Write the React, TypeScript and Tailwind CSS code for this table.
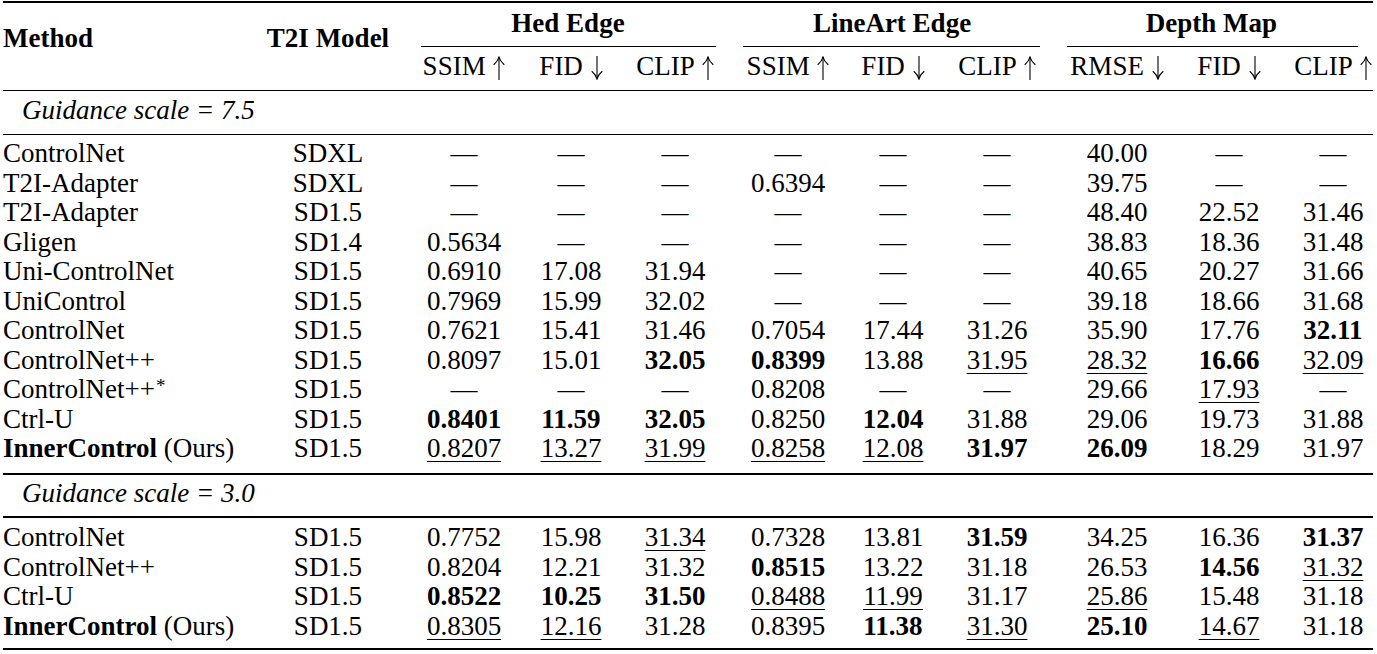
import React from "react";

const GRID =
  "grid grid-cols-[251px_148px_124px_90px_118px_108px_102px_106px_134px_90px_99px]";

type Row = { m: React.ReactNode; t: string; v: string[] };

const D = "—";

const sec1: Row[] = [
  { m: "ControlNet", t: "SDXL", v: [D, D, D, D, D, D, "40.00", D, D] },
  { m: "T2I-Adapter", t: "SDXL", v: [D, D, D, "0.6394", D, D, "39.75", D, D] },
  { m: "T2I-Adapter", t: "SD1.5", v: [D, D, D, D, D, D, "48.40", "22.52", "31.46"] },
  { m: "Gligen", t: "SD1.4", v: ["0.5634", D, D, D, D, D, "38.83", "18.36", "31.48"] },
  { m: "Uni-ControlNet", t: "SD1.5", v: ["0.6910", "17.08", "31.94", D, D, D, "40.65", "20.27", "31.66"] },
  { m: "UniControl", t: "SD1.5", v: ["0.7969", "15.99", "32.02", D, D, D, "39.18", "18.66", "31.68"] },
  { m: "ControlNet", t: "SD1.5", v: ["0.7621", "15.41", "31.46", "0.7054", "17.44", "31.26", "35.90", "17.76", "**32.11**"] },
  { m: "ControlNet++", t: "SD1.5", v: ["0.8097", "15.01", "**32.05**", "**0.8399**", "13.88", "_31.95_", "_28.32_", "**16.66**", "_32.09_"] },
  {
    m: (
      <>
        ControlNet++
        <span className="inline-block align-top text-[19px] leading-[19px] mt-[1px] ml-[1px]">*</span>
      </>
    ),
    t: "SD1.5",
    v: [D, D, D, "0.8208", D, D, "29.66", "_17.93_", D],
  },
  { m: "Ctrl-U", t: "SD1.5", v: ["**0.8401**", "**11.59**", "**32.05**", "0.8250", "**12.04**", "31.88", "29.06", "19.73", "31.88"] },
  {
    m: (
      <>
        <span className="font-bold">InnerControl</span> (Ours)
      </>
    ),
    t: "SD1.5",
    v: ["_0.8207_", "_13.27_", "_31.99_", "_0.8258_", "_12.08_", "**31.97**", "**26.09**", "18.29", "31.97"],
  },
];

const sec2: Row[] = [
  { m: "ControlNet", t: "SD1.5", v: ["0.7752", "15.98", "_31.34_", "0.7328", "13.81", "**31.59**", "34.25", "16.36", "**31.37**"] },
  { m: "ControlNet++", t: "SD1.5", v: ["0.8204", "12.21", "31.32", "**0.8515**", "13.22", "31.18", "26.53", "**14.56**", "_31.32_"] },
  { m: "Ctrl-U", t: "SD1.5", v: ["**0.8522**", "**10.25**", "**31.50**", "_0.8488_", "_11.99_", "31.17", "_25.86_", "15.48", "31.18"] },
  {
    m: (
      <>
        <span className="font-bold">InnerControl</span> (Ours)
      </>
    ),
    t: "SD1.5",
    v: ["_0.8305_", "_12.16_", "31.28", "0.8395", "**11.38**", "_31.30_", "**25.10**", "_14.67_", "31.18"],
  },
];

function Val({ v, last }: { v: string; last: boolean }) {
  let bold = false;
  let ul = false;
  let t = v;
  if (t.startsWith("**")) {
    bold = true;
    t = t.slice(2, -2);
  } else if (t.startsWith("_")) {
    ul = true;
    t = t.slice(1, -1);
  }
  return (
    <div className={last ? "text-center whitespace-nowrap pl-[19px]" : "text-center whitespace-nowrap"}>
      <span
        className={
          bold ? "font-bold" : ul ? "underline decoration-1 underline-offset-[4px]" : ""
        }
      >
        {t}
      </span>
    </div>
  );
}

function Body({ rows }: { rows: Row[] }) {
  return (
    <div className={GRID + " auto-rows-[29.5px]"}>
      {rows.map((r, i) => (
        <React.Fragment key={i}>
          <div className="whitespace-nowrap">{r.m}</div>
          <div className="text-center">{r.t}</div>
          {r.v.map((v, j) => (
            <Val key={j} v={v} last={j === 8} />
          ))}
        </React.Fragment>
      ))}
    </div>
  );
}

function Arrow({ up }: { up: boolean }) {
  return (
    <svg
      viewBox="0 0 12 24"
      className="inline-block w-[12px] h-[24px] align-[-5px] ml-[1px]"
      fill="none"
      stroke="black"
      strokeWidth="1.1"
      strokeLinecap="round"
    >
      {up ? (
        <>
          <path d="M6 1.2 V24" />
          <path d="M1 8.5 C3 6.8 5 4.5 6 1.2 C7 4.5 9 6.8 11 8.5" />
        </>
      ) : (
        <>
          <path d="M6 0 V22.8" />
          <path d="M1 15.5 C3 17.2 5 19.5 6 22.8 C7 19.5 9 17.2 11 15.5" />
        </>
      )}
    </svg>
  );
}

const subs: [string, boolean][] = [
  ["SSIM", true],
  ["FID", false],
  ["CLIP", true],
  ["SSIM", true],
  ["FID", false],
  ["CLIP", true],
  ["RMSE", false],
  ["FID", false],
  ["CLIP", true],
];

export default function App() {
  return (
    <div className="w-[1377px] h-[654px] bg-white overflow-hidden pl-[3px] pt-[1px] text-black text-[27px] leading-[29.5px] font-['Liberation_Serif','Times_New_Roman',serif]">
      <div className="w-[1370px]">
        <div className="h-[2px] bg-black" />
        <div className={GRID + " mt-[6px] grid-rows-[29.5px_13.5px_29.5px]"}>
          <div className="row-span-3 font-bold pt-[15px]">Method</div>
          <div className="row-span-3 font-bold pt-[15px] text-center">T2I Model</div>
          <div className="col-span-3 font-bold text-center">Hed Edge</div>
          <div className="col-span-3 font-bold text-center">LineArt Edge</div>
          <div className="col-span-3 font-bold text-center">Depth Map</div>
          <div className="col-span-3 pt-[7px]">
            <div className="h-[1px] bg-black ml-[19px] mr-[18px]" />
          </div>
          <div className="col-span-3 pt-[7px]">
            <div className="h-[1px] bg-black ml-[9px] mr-[10px]" />
          </div>
          <div className="col-span-3 pt-[7px]">
            <div className="h-[1px] bg-black ml-[17px] mr-[15px]" />
          </div>
          {subs.map(([s, up], i) => (
            <div key={i} className={i === 8 ? "text-center whitespace-nowrap pl-[19px]" : "text-center whitespace-nowrap"}>
              {s} <Arrow up={up} />
            </div>
          ))}
        </div>
        <div className="mt-[8px] h-[1.3px] bg-black" />
        <div className="mt-[5.3px] h-[29.5px] pl-[19px] italic">Guidance scale = 7.5</div>
        <div className="mt-[8.6px] h-[1.3px] bg-black" />
        <div className="mt-[3.6px]">
          <Body rows={sec1} />
        </div>
        <div className="mt-[9.8px] h-[1.3px] bg-black" />
        <div className="mt-[4.4px] h-[29.5px] pl-[19px] italic">Guidance scale = 3.0</div>
        <div className="mt-[7.8px] h-[1.3px] bg-black" />
        <div className="mt-[5.4px]">
          <Body rows={sec2} />
        </div>
        <div className="mt-[6.9px] h-[2px] bg-black" />
      </div>
    </div>
  );
}
